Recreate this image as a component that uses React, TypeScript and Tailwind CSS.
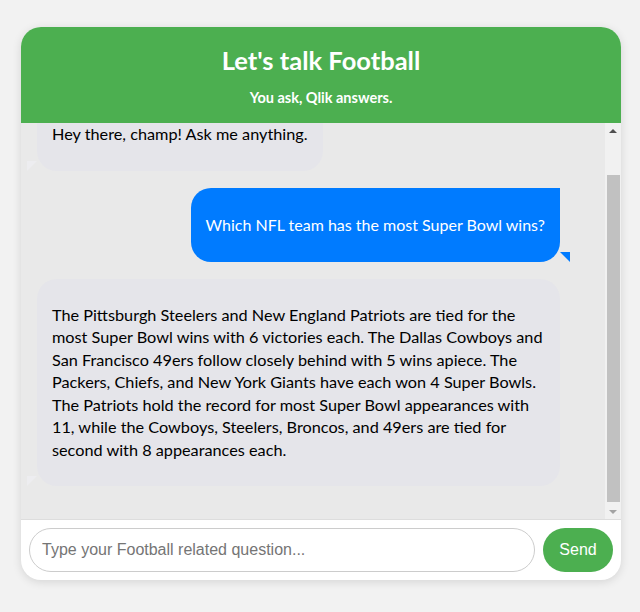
import React, { useEffect, useRef } from "react";

interface Message {
    id: number;
    from: "bot" | "user";
    text: string;
}

const messages: Message[] = [
    { id: 1, from: "bot", text: "Hey there, champ! Ask me anything." },
    { id: 2, from: "user", text: "Which NFL team has the most Super Bowl wins?" },
    {
        id: 3,
        from: "bot",
        text: "The Pittsburgh Steelers and New England Patriots are tied for the most Super Bowl wins with 6 victories each. The Dallas Cowboys and San Francisco 49ers follow closely behind with 5 wins apiece. The Packers, Chiefs, and New York Giants have each won 4 Super Bowls. The Patriots hold the record for most Super Bowl appearances with 11, while the Cowboys, Steelers, Broncos, and 49ers are tied for second with 8 appearances each.",
    },
];

const ChatBubble: React.FC<{ msg: Message }> = ({ msg }) => {
    if (msg.from === "user") {
        return (
            <div className="flex justify-end">
                <div className="relative max-w-full rounded-[20px] rounded-tr-none bg-[#007bff] px-[15px] py-[26px] text-[16px] text-white">
                    <p className="leading-[22px]">{msg.text}</p>
                    {/* tail */}
                    <div className="absolute -right-[10px] bottom-0 h-0 w-0 border-t-[10px] border-l-[10px] border-t-[#007bff] border-l-transparent"></div>
                </div>
            </div>
        );
    }
    return (
        <div className="flex justify-start">
            <div className="relative max-w-full rounded-[20px] bg-[#e5e5ea] px-[15px] py-[25px] text-black">
                <p className="leading-[22.5px]">{msg.text}</p>
                <div className="absolute -left-[10px] bottom-0 h-0 w-0 border-t-[10px] border-r-[10px] border-t-[#ededf0] border-r-transparent"></div>
            </div>
        </div>
    );
};

// drawn scrollbar, the page is already scrolled to the bottom
const ScrollBar = () => (
    <div className="flex w-[16px] shrink-0 flex-col items-center bg-[#f1f1f1]">
        <div className="flex h-[15px] w-full items-center justify-center">
            <div className="h-0 w-0 border-x-[4px] border-b-[4px] border-x-transparent border-b-[#505050]"></div>
        </div>
        <div className="mt-[37px] ml-[2px] mr-[1px] h-[327px] self-stretch bg-[#c1c1c1]"></div>
        <div className="mt-[2px] flex h-[15px] w-full items-center justify-center">
            <div className="h-0 w-0 border-x-[4px] border-t-[4px] border-x-transparent border-t-[#a3a3a3]"></div>
        </div>
    </div>
);

export default function App() {
    const chatRef = useRef<HTMLDivElement | null>(null);

    useEffect(() => {
        // keep the latest answer in view
        if (chatRef.current) {
            chatRef.current.scrollTop = chatRef.current.scrollHeight;
        }
    }, []);

    return (
        <div
            className="min-h-[612px] bg-[#f2f2f2] pt-[27px]"
            style={{ fontFamily: "Lato, sans-serif" }}
        >
            <div className="ml-[21px] w-[600px] overflow-hidden rounded-[20px] bg-white shadow-[0_2px_10px_rgba(0,0,0,0.12)]">
                <div className="flex h-[96px] flex-col items-center bg-[#4caf50] text-white">
                    <h2 className="mt-[18px] text-[25.5px] font-bold leading-[30px]">
                        Let's talk Football
                    </h2>
                    <p className="mt-[14px] text-[14.5px] font-bold leading-[18px]">
                        You ask, Qlik answers.
                    </p>
                </div>

                <div className="flex h-[396px] bg-[#e9e9e9]">
                    <div
                        ref={chatRef}
                        className="flex-1 overflow-y-scroll [scrollbar-width:none]"
                    >
                        <div className="flex flex-col gap-[17px] pt-[20px] pb-[33px] pl-4 pr-[45px] text-[16.25px]">
                            {messages.map((m) => (
                                <ChatBubble key={m.id} msg={m} />
                            ))}
                        </div>
                    </div>
                    <ScrollBar />
                </div>

                <div
                    className="flex items-center gap-2 border-t border-[#ddd] p-2"
                    style={{ fontFamily: "'Liberation Sans', Arial, sans-serif" }}
                >
                    <input
                        type="text"
                        placeholder="Type your Football related question..."
                        className="h-[44px] flex-1 rounded-full border border-[#ccc] px-3 text-[16px] outline-none placeholder:text-[#757575]"
                    />
                    <button className="h-[44px] w-[70px] rounded-[22px] bg-[#4caf50] text-[16px] text-white">
                        Send
                    </button>
                </div>
            </div>
        </div>
    );
}
